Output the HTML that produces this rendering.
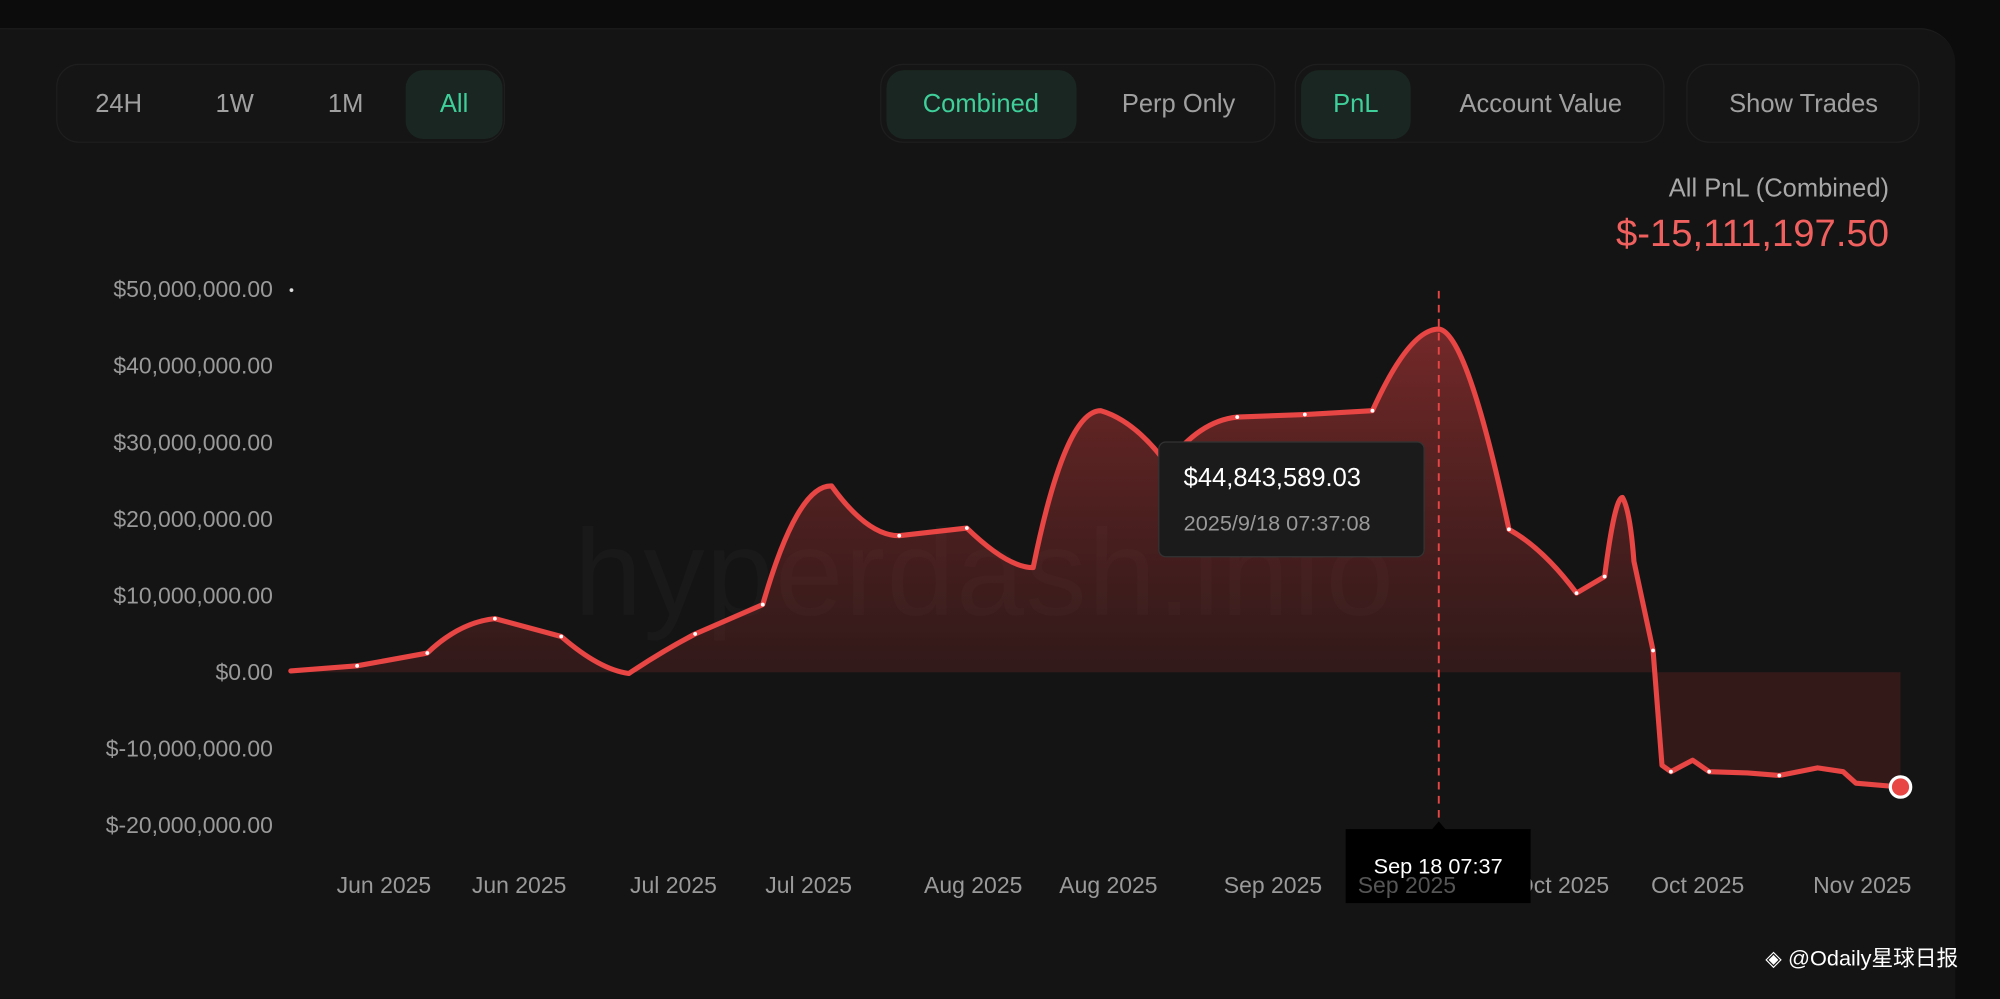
<!DOCTYPE html>
<html><head><meta charset="utf-8"><style>
html,body{margin:0;padding:0;background:#0c0c0c;width:2000px;height:980px;overflow:hidden}
#w{position:absolute;left:0;top:0;width:1568px;height:768px;transform:scale(1.27551);transform-origin:0 0;font-family:"Liberation Sans","Noto Sans CJK SC",sans-serif}
.panel{position:absolute;left:0;top:22px;width:1533px;height:760px;background:#141414;border-top-right-radius:28px;border-top:1px solid #1c1c1c}
.grp{position:absolute;top:50px;height:62px;background:#151515;border:1px solid #1e1e1e;border-radius:18px;box-sizing:border-box}
.it{position:absolute;top:0;height:62px;line-height:62px;font-size:20px;color:#a0a0a0;text-align:center;transform:translateX(-50%);white-space:nowrap}
.act{position:absolute;top:4px;height:54px;background:#1a2621;border-radius:14px}
.g{color:#3ecf9a}
.yl{position:absolute;right:1354px;font-size:18px;color:#9a9a9a;white-space:nowrap}
.xl{position:absolute;top:684px;font-size:18px;color:#9a9a9a;transform:translateX(-50%);white-space:nowrap}
</style></head><body><div id="w">
<div class="panel"></div>
<div class="grp" style="left:44px;width:352px"><div class="act" style="left:273px;width:76px"></div>
<div class="it" style="left:48px">24H</div><div class="it" style="left:139px">1W</div><div class="it" style="left:226px">1M</div><div class="it g" style="left:311px">All</div></div>
<div class="grp" style="left:690px;width:310px"><div class="act" style="left:4px;width:149px"></div>
<div class="it g" style="left:78px">Combined</div><div class="it" style="left:233px">Perp Only</div></div>
<div class="grp" style="left:1015px;width:290px"><div class="act" style="left:4px;width:86px"></div>
<div class="it g" style="left:47px">PnL</div><div class="it" style="left:192px">Account Value</div></div>
<div class="grp" style="left:1322px;width:183px"><div class="it" style="left:91px">Show Trades</div></div>
<div style="position:absolute;right:87px;top:137px;font-size:20px;color:#a8a8a8">All PnL (Combined)</div>
<div style="position:absolute;right:87px;top:167px;font-size:30px;color:#f0605e">$-15,111,197.50</div>
<div style="position:absolute;left:450px;top:395px;font-size:96px;color:#191919;letter-spacing:1px">hyperdash.info</div>
<div class="yl" style="top:217px">$50,000,000.00</div>
<div class="yl" style="top:277px">$40,000,000.00</div>
<div class="yl" style="top:337px">$30,000,000.00</div>
<div class="yl" style="top:397px">$20,000,000.00</div>
<div class="yl" style="top:457px">$10,000,000.00</div>
<div class="yl" style="top:517px">$0.00</div>
<div class="yl" style="top:577px">$-10,000,000.00</div>
<div class="yl" style="top:637px">$-20,000,000.00</div>
<div style="position:absolute;left:227px;top:226px;width:3px;height:3px;background:#ddd;border-radius:50%"></div>
<div class="xl" style="left:301px">Jun 2025</div><div class="xl" style="left:407px">Jun 2025</div>
<div class="xl" style="left:528px">Jul 2025</div><div class="xl" style="left:634px">Jul 2025</div>
<div class="xl" style="left:763px">Aug 2025</div><div class="xl" style="left:869px">Aug 2025</div>
<div class="xl" style="left:998px">Sep 2025</div>
<div class="xl" style="left:1225px">Oct 2025</div><div class="xl" style="left:1331px">Oct 2025</div>
<div class="xl" style="left:1460px">Nov 2025</div>
<svg style="position:absolute;left:0;top:0" width="1568" height="768">
<defs><linearGradient id="gr" x1="0" y1="250" x2="0" y2="527" gradientUnits="userSpaceOnUse"><stop offset="0" stop-color="#c83a3a" stop-opacity=".55"/><stop offset="1" stop-color="#8a2a2a" stop-opacity=".25"/></linearGradient></defs>
<path d="M228,526 L280,522 L335,512 Q360,488 388,485 L440,499 Q470,525 493,528 Q520,510 545,497 Q575,484 598,474 Q625,380 652,381 Q680,420 705,420 L758,414 Q790,445 810,445 Q835,322 863,322 Q890,330 915,364 Q940,330 970,327 L1023,325 L1076,322 Q1105,258 1128,258 Q1150,260 1183,415 Q1210,430 1236,465 L1258,452 Q1266,390 1272,390 Q1278,400 1281,440 L1296,510 L1297.5,527 L228,527 Z" fill="url(#gr)"/>
<path d="M1297.5,527 L1303,600 L1310,605 L1327,596 L1340,605 L1370,606 L1395,608 L1425,602 L1445,605 L1455,614 L1490,617 L1490,527 Z" fill="#5a2020" fill-opacity=".45"/>
<line x1="1128" y1="228" x2="1128" y2="645" stroke="#e84545" stroke-width="1.5" stroke-dasharray="6,5"/>
<path d="M228,526 L280,522 L335,512 Q360,488 388,485 L440,499 Q470,525 493,528 Q520,510 545,497 Q575,484 598,474 Q625,380 652,381 Q680,420 705,420 L758,414 Q790,445 810,445 Q835,322 863,322 Q890,330 915,364 Q940,330 970,327 L1023,325 L1076,322 Q1105,258 1128,258 Q1150,260 1183,415 Q1210,430 1236,465 L1258,452 Q1266,390 1272,390 Q1278,400 1281,440 L1296,510 L1303,600 L1310,605 L1327,596 L1340,605 L1370,606 L1395,608 L1425,602 L1445,605 L1455,614 L1490,617" fill="none" stroke="#e84545" stroke-width="4" stroke-linejoin="round" stroke-linecap="round"/>
<g fill="#fff"><circle cx="280" cy="522" r="1.5"/><circle cx="335" cy="512" r="1.5"/><circle cx="388" cy="485" r="1.5"/><circle cx="440" cy="499" r="1.5"/><circle cx="545" cy="497" r="1.5"/><circle cx="598" cy="474" r="1.5"/><circle cx="705" cy="420" r="1.5"/><circle cx="758" cy="414" r="1.5"/><circle cx="970" cy="327" r="1.5"/><circle cx="1023" cy="325" r="1.5"/><circle cx="1076" cy="322" r="1.5"/><circle cx="1183" cy="415" r="1.5"/><circle cx="1236" cy="465" r="1.5"/><circle cx="1258" cy="452" r="1.5"/><circle cx="1296" cy="510" r="1.5"/><circle cx="1310" cy="605" r="1.5"/><circle cx="1340" cy="605" r="1.5"/><circle cx="1395" cy="608" r="1.5"/></g>
<circle cx="1490" cy="617" r="8" fill="#e84545" stroke="#fff" stroke-width="2.5"/>
<path d="M1122,651 L1128,644 L1134,651 Z" fill="#000"/>
</svg>
<div style="position:absolute;left:908px;top:346px;width:209px;height:91px;box-sizing:border-box;background:#1b1b1b;border:1px solid #333;border-radius:6px">
<div style="position:absolute;left:19px;top:17px;font-size:20px;color:#fff">$44,843,589.03</div>
<div style="position:absolute;left:19px;top:54px;font-size:17px;color:#999">2025/9/18 07:37:08</div></div>
<div style="position:absolute;left:1055px;top:650px;width:145px;height:58px;background:#000"></div>
<div class="xl" style="left:1103px;color:#555">Sep 2025</div>
<div style="position:absolute;left:1055px;top:650px;width:145px;height:58px;color:#fff;font-size:17px;line-height:60px;text-align:center">Sep 18 07:37</div>
<div style="position:absolute;left:1384px;top:737px;font-size:17px;color:#fff;white-space:nowrap">◈ @Odaily星球日报</div>
</div></body></html>
